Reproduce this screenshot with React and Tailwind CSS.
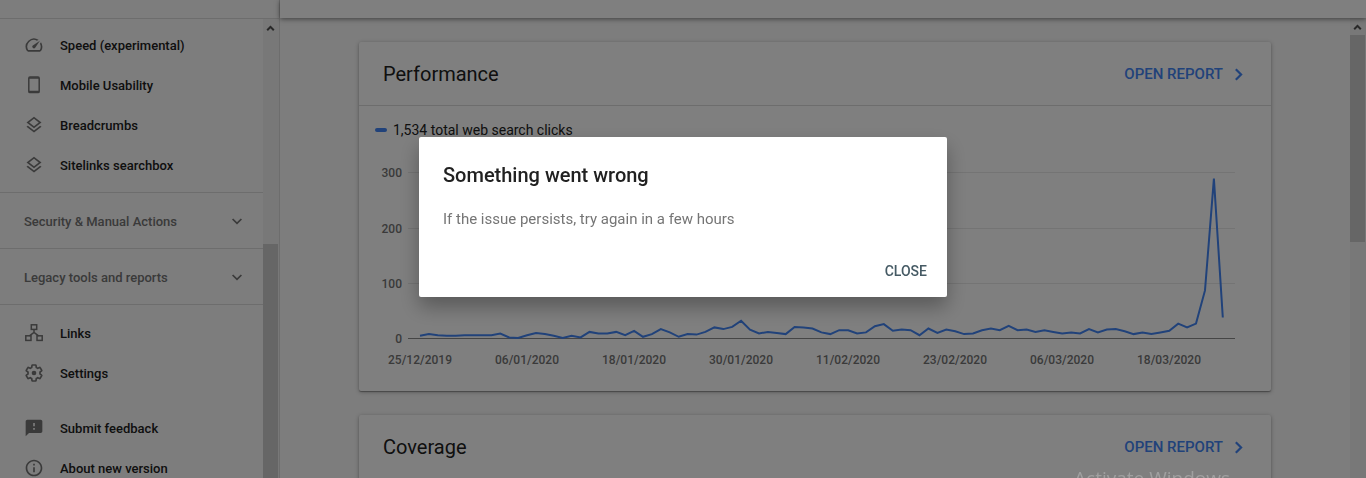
import { MdSpeed, MdOutlineLayers, MdFeedback, MdOutlineInfo } from "react-icons/md";

const clicks = [
  5, 8, 6, 5, 5, 6, 6, 6, 6, 9, 2, 1, 6, 10, 8, 5, 1, 5, 2, 12, 9, 9, 12, 6, 14, 3, 8, 17, 11, 3,
  8, 7, 12, 20, 17, 21, 32, 16, 9, 12, 10, 8, 21, 20, 18, 11, 8, 15, 15, 9, 11, 22, 26, 14, 16, 15, 6, 18, 10, 16,
  13, 8, 9, 15, 18, 15, 23, 15, 16, 12, 15, 12, 9, 11, 9, 17, 11, 16, 17, 13, 8, 11, 8, 11, 14, 27, 20, 27, 87, 289, 38,
];
const dates = ["25/12/2019", "06/01/2020", "18/01/2020", "30/01/2020", "11/02/2020", "23/02/2020", "06/03/2020", "18/03/2020"];
const ticks = [
  { label: "300", y: 22 },
  { label: "200", y: 78 },
  { label: "100", y: 133 },
  { label: "0", y: 188 },
];

const dayX = (day) => 61 + day * 8.92;
const points = clicks.map((n, day) => `${dayX(day).toFixed(1)},${(188.5 - n * 0.5533).toFixed(1)}`).join(" ");

function PhoneIcon() {
  return (
    <svg viewBox="0 0 20 20" className="size-5" fill="none" stroke="currentColor" strokeWidth="1.5" aria-hidden="true">
      <rect x="4.8" y="2" width="10.4" height="15.6" rx="1.2" />
      <path d="M5 3h10M5 16.6h10" />
    </svg>
  );
}

function LinksIcon() {
  return (
    <svg viewBox="0 0 20 20" className="size-5" fill="none" stroke="currentColor" strokeWidth="1.5" aria-hidden="true">
      <rect x="7.3" y="1.8" width="5.4" height="4.6" />
      <rect x="1.8" y="12.8" width="5.2" height="4.6" />
      <rect x="13" y="12.8" width="5.2" height="4.6" />
      <path d="M10 6.4v3.4M5.4 12.8 10 9.4l4.6 3.4" />
    </svg>
  );
}

function GearIcon() {
  return (
    <svg viewBox="0 0 24 24" className="size-5" fill="none" stroke="currentColor" strokeWidth="2" aria-hidden="true">
      <path d="M19.14 12.94c.04-.3.06-.61.06-.94 0-.32-.02-.64-.07-.94l2.03-1.58c.18-.14.23-.41.12-.61l-1.92-3.32c-.12-.22-.37-.29-.59-.22l-2.39.96c-.5-.38-1.03-.7-1.62-.94l-.36-2.54c-.04-.24-.24-.41-.48-.41h-3.84c-.24 0-.43.17-.47.41l-.36 2.54c-.59.24-1.13.57-1.62.94l-2.39-.96c-.22-.08-.47 0-.59.22L2.74 8.87c-.12.21-.08.47.12.61l2.03 1.58c-.05.3-.09.63-.09.94s.02.64.07.94l-2.03 1.58c-.18.14-.23.41-.12.61l1.92 3.32c.12.22.37.29.59.22l2.39-.96c.5.38 1.03.7 1.62.94l.36 2.54c.05.24.24.41.48.41h3.84c.24 0 .44-.17.47-.41l.36-2.54c.59-.24 1.13-.56 1.62-.94l2.39.96c.22.08.47 0 .59-.22l1.92-3.32c.12-.22.07-.47-.12-.61z" />
      <circle cx="12" cy="12" r="2.8" fill="currentColor" stroke="none" />
    </svg>
  );
}

function ChevronDown() {
  return (
    <svg viewBox="0 0 20 20" className="size-5" fill="none" stroke="currentColor" strokeWidth="1.7" aria-hidden="true">
      <path d="M5.6 8 10 12.4 14.4 8" />
    </svg>
  );
}

function ChevronRight() {
  return (
    <svg viewBox="0 0 24 24" className="size-6" fill="none" stroke="currentColor" strokeWidth="2.2" aria-hidden="true">
      <path d="M8.8 6.2 14.1 11.5l-5.3 5.3" />
    </svg>
  );
}

function ScrollArrow() {
  return (
    <svg viewBox="0 0 15 16" className="h-4 w-full" fill="none" stroke="currentColor" strokeWidth="2" aria-hidden="true">
      <path d="m4.2 11.2 3.3-3.3 3.3 3.3" />
    </svg>
  );
}

function NavItem({ icon, children }) {
  return (
    <a href="#" className="flex h-10 shrink-0 items-center gap-4 pl-6 text-[13px] font-medium text-[#212121]">
      <span className="text-[#757575]">{icon}</span>
      <span className="pt-0.5">{children}</span>
    </a>
  );
}

function NavGroup({ children }) {
  return (
    <button type="button" className="flex h-14 w-full shrink-0 items-center justify-between border-t border-[#dadada] pr-4 pl-6 text-[13px] font-medium text-[#757575]">
      <span className="pt-0.5">{children}</span>
      <ChevronDown />
    </button>
  );
}

function CardHeader({ title }) {
  return (
    <div className="flex h-16 items-center justify-between border-b border-[#dadada] pr-5 pl-6">
      <h2 className="text-xl text-[#212121]">{title}</h2>
      <a href="#" className="flex items-center gap-1 pt-0.5 text-[15px] font-medium text-[#4285f4]">
        OPEN REPORT
        <ChevronRight />
      </a>
    </div>
  );
}

function PerformanceChart() {
  return (
    <svg viewBox="0 0 912 241" className="block w-full" role="img" aria-label="Web search clicks per day">
      {ticks.map((t) => (
        <g key={t.label}>
          <rect x="49" y={t.y} width="827" height="1" fill={t.label === "0" ? "#8a8a8a" : "#e8e8e8"} />
          <text x="43" y={t.y + 5} textAnchor="end" fontSize="12" fontWeight="500" fill="#757575">{t.label}</text>
        </g>
      ))}
      {dates.map((d, i) => (
        <text key={d} x={61 + i * 107} y="214" textAnchor="middle" fontSize="12" fontWeight="500" fill="#757575">{d}</text>
      ))}
      <polyline points={points} fill="none" stroke="#4285f4" strokeWidth="2" />
    </svg>
  );
}

export default function App() {
  return (
    <div className="flex h-screen overflow-hidden bg-[#fafafa] font-['Roboto',sans-serif]">
      <aside className="flex w-70 shrink-0 flex-col border-r border-[#dadada] bg-[#fafafa]">
        <div className="h-[19px] shrink-0 border-b border-[#dadada]" />
        <div className="flex min-h-0 flex-1">
          <nav className="flex min-w-0 flex-1 flex-col overflow-hidden pt-1.5">
            <NavItem icon={<MdSpeed className="size-5" />}>Speed (experimental)</NavItem>
            <NavItem icon={<PhoneIcon />}>Mobile Usability</NavItem>
            <NavItem icon={<MdOutlineLayers className="size-5" />}>Breadcrumbs</NavItem>
            <NavItem icon={<MdOutlineLayers className="size-5" />}>Sitelinks searchbox</NavItem>
            <div className="mt-[7px] mb-2 shrink-0 border-b border-[#dadada]">
              <NavGroup>Security &amp; Manual Actions</NavGroup>
              <NavGroup>Legacy tools and reports</NavGroup>
            </div>
            <NavItem icon={<LinksIcon />}>Links</NavItem>
            <NavItem icon={<GearIcon />}>Settings</NavItem>
            <div className="mt-[15px] shrink-0">
              <NavItem icon={<MdFeedback className="size-5" />}>Submit feedback</NavItem>
              <NavItem icon={<MdOutlineInfo className="size-5" />}>About new version</NavItem>
            </div>
          </nav>
          <div className="flex w-4 flex-col justify-between bg-[#f1f1f1] pr-px text-[#505050]">
            <ScrollArrow />
            <div className="h-[51%] bg-[#cdcdcd]" />
          </div>
        </div>
      </aside>

      <div className="flex min-w-0 flex-1 flex-col">
        <header className="z-10 h-[18px] shrink-0 bg-white shadow-[0_1px_5px_rgba(0,0,0,0.5)]" />
        <div className="flex min-h-0 flex-1">
          <main className="min-w-0 flex-1 overflow-hidden px-6 pt-6">
            <div className="mx-auto flex max-w-228 flex-col gap-6">
              <section className="rounded-xs bg-white shadow-[0_1px_4px_rgba(0,0,0,0.3),0_1px_1px_rgba(0,0,0,0.3)]">
                <CardHeader title="Performance" />
                <p className="flex h-11 items-center gap-1.5 px-4 pt-1 text-sm text-[#212121]">
                  <span className="h-1 w-3 rounded-full bg-[#4285f4]" />
                  1,534 total web search clicks
                </p>
                <PerformanceChart />
              </section>
              <section className="rounded-xs bg-white pb-40 shadow-[0_1px_4px_rgba(0,0,0,0.3),0_1px_1px_rgba(0,0,0,0.3)]">
                <CardHeader title="Coverage" />
              </section>
            </div>
          </main>
          <div className="flex w-4 flex-col bg-[#f1f1f1] pr-px text-[#505050]">
            <ScrollArrow />
            <div className="mt-px h-[45%] bg-[#cdcdcd]" />
          </div>
        </div>
      </div>

      <div className="fixed inset-0 z-20 flex items-start justify-center bg-black/50 px-4 pt-[137px]">
        <div role="dialog" aria-modal="true" aria-labelledby="dialog-title" className="w-full max-w-132 rounded-xs bg-white px-6 pt-6 pb-2 shadow-[0_10px_20px_rgba(0,0,0,0.3)]">
          <h1 id="dialog-title" className="text-xl font-medium text-[#212121]">Something went wrong</h1>
          <p className="mt-[18px] text-[15px] leading-6 text-[#757575]">If the issue persists, try again in a few hours</p>
          <div className="mt-[22px] -mr-3 flex justify-end">
            <button type="button" className="h-9 px-2 text-sm font-medium text-[#455a64]">CLOSE</button>
          </div>
        </div>
      </div>

      <div className="pointer-events-none fixed right-[136px] bottom-0 z-30 h-3 overflow-hidden font-['Open_Sans',sans-serif] text-[19px] leading-6 text-[#a0a0a0]">
        Activate Windows
      </div>
    </div>
  );
}
